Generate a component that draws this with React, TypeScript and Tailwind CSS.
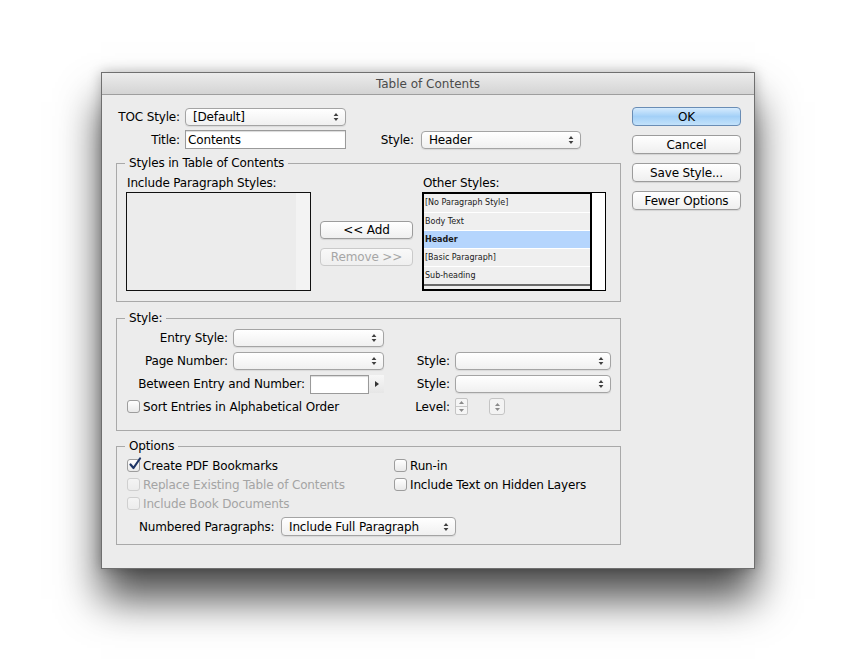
import React from "react";

const F = "font-['DejaVu_Sans',sans-serif] tracking-[-0.15px]";

function Arrows({ disabled }: { disabled?: boolean }) {
  return (
    <svg width="6" height="10" viewBox="0 0 6 10" className="shrink-0">
      <path d="M0.6 4 L3 1 L5.4 4 Z M0.6 6 L3 9 L5.4 6 Z" fill={disabled ? "#a0a0a0" : "#404040"} />
    </svg>
  );
}

function Select({ cls, value }: { cls: string; value?: string }) {
  return (
    <div
      className={`flex items-center justify-between rounded-[4px] border border-[#a4a4a4] bg-linear-to-b from-white to-[#f0f0f0] pl-[7px] pr-[6px] shadow-[0_1px_1px_rgba(0,0,0,0.08)] ${cls}`}
    >
      <span className="whitespace-nowrap text-[12px] leading-none text-black">{value ?? ""}</span>
      <Arrows />
    </div>
  );
}

function Button({ cls, children, primary, disabled }: { cls: string; children: React.ReactNode; primary?: boolean; disabled?: boolean }) {
  const base = "flex items-center justify-center rounded-[4px] border text-[12px] leading-none whitespace-nowrap";
  const look = primary
    ? "border-[#6a8db5] bg-linear-to-b from-[#d6ebfd] via-[#a3d0f7] to-[#c3e2fb] text-black"
    : disabled
    ? "border-[#cacaca] bg-linear-to-b from-[#f9f9f9] to-[#efefef] text-[#a6a6a6]"
    : "border-[#9c9c9c] bg-linear-to-b from-white to-[#efefef] text-black shadow-[0_1px_1px_rgba(0,0,0,0.1)]";
  return <div className={`${base} ${look} ${cls}`}>{children}</div>;
}

function Check({ checked, disabled }: { checked?: boolean; disabled?: boolean }) {
  return (
    <div
      className={`relative h-[13px] w-[13px] shrink-0 rounded-[3px] border bg-linear-to-b ${
        disabled ? "border-[#cfcfcf] from-[#f4f4f4] to-[#ececec]" : "border-[#9d9d9d] from-white to-[#e9e9e9]"
      }`}
    >
      {checked && (
        <svg width="15" height="15" viewBox="0 0 15 15" className="absolute -top-[3px] left-[0px]">
          <path d="M2.5 7.5 L5.5 11 L12 1.5" fill="none" stroke="#1e3566" strokeWidth="2.2" strokeLinecap="round" strokeLinejoin="round" />
        </svg>
      )}
    </div>
  );
}

function CheckRow({ label, checked, disabled }: { label: string; checked?: boolean; disabled?: boolean }) {
  return (
    <div className="flex h-[19px] items-center">
      <Check checked={checked} disabled={disabled} />
      <span className={`ml-[3px] whitespace-nowrap text-[12px] ${disabled ? "text-[#a4a4a4]" : "text-black"}`}>{label}</span>
    </div>
  );
}

function Legend({ children }: { children: React.ReactNode }) {
  return <legend className="ml-[8px] px-[4px] text-[12px] leading-[14px] text-black">{children}</legend>;
}

function ListRow({ text, selected, bold, first }: { text: string; selected?: boolean; bold?: boolean; first?: boolean }) {
  return (
    <div
      className={`flex h-[18px] items-center whitespace-nowrap pl-[1px] text-[8px] tracking-normal ${first ? "" : "border-t border-white"} ${
        selected ? "bg-[#b5d5fd]" : "bg-[#efefef]"
      } ${bold ? "font-bold" : ""} text-[#1a1a1a]`}
    >
      {text}
    </div>
  );
}

function Stepper() {
  return (
    <div className="ml-[5px] flex h-[17px] items-stretch">
      <div className="flex w-[13px] flex-col rounded-[2px] border border-[#c4c4c4] bg-[#f5f5f5]">
        <div className="flex flex-1 items-center justify-center border-b border-[#c9c9c9]">
          <svg width="5" height="3" viewBox="0 0 5 3"><path d="M0 3 L2.5 0 L5 3 Z" fill="#8a8a8a" /></svg>
        </div>
        <div className="flex flex-1 items-center justify-center">
          <svg width="5" height="3" viewBox="0 0 5 3"><path d="M0 0 L2.5 3 L5 0 Z" fill="#8a8a8a" /></svg>
        </div>
      </div>
      <div className="w-[21px]" />
      <div className="flex w-[16px] flex-col items-center justify-center gap-[2px] rounded-[3px] border border-[#c4c4c4] bg-[#f3f3f3]">
        <svg width="5" height="3" viewBox="0 0 5 3"><path d="M0 3 L2.5 0 L5 3 Z" fill="#8a8a8a" /></svg>
        <svg width="5" height="3" viewBox="0 0 5 3"><path d="M0 0 L2.5 3 L5 0 Z" fill="#8a8a8a" /></svg>
      </div>
    </div>
  );
}

export default function App() {
  return (
    <div className={`h-[667px] w-[850px] overflow-hidden bg-white pl-[101px] pt-[72px] ${F}`}>
      <div className="flex h-[497px] w-[654px] flex-col border border-[#6f6f6f] bg-[#ececec] shadow-[0_30px_40px_rgba(0,0,0,0.7),0_0_12px_rgba(0,0,0,0.25)]">
        {/* Title bar */}
        <div className="flex h-[22px] items-center justify-center border-b border-[#9e9e9e] bg-linear-to-b from-[#ececec] to-[#d4d4d4] text-[12px] tracking-normal text-[#4b4b4b]">
          Table of Contents
        </div>

        <div className="flex pl-[14px]">
          {/* Left column */}
          <div className="flex w-[505px] flex-col pt-[13px]">
            <div className="flex h-[18px] items-center">
              <span className="w-[64px] whitespace-nowrap text-right text-[12px] text-black">TOC Style:</span>
              <Select cls="ml-[5px] h-[18px] w-[161px]" value="[Default]" />
            </div>
            <div className="mt-[4px] flex h-[19px] items-center">
              <span className="w-[64px] text-right text-[12px] text-black">Title:</span>
              <div className="ml-[5px] flex h-[19px] w-[161px] items-center border border-[#9a9a9a] bg-white pl-[2px] text-[12px] shadow-[inset_0_1px_1px_rgba(0,0,0,0.15)]">
                Contents
              </div>
              <span className="w-[68px] text-right text-[12px] text-black">Style:</span>
              <Select cls="ml-[7px] h-[18px] w-[160px]" value="Header" />
            </div>

            {/* Styles in Table of Contents */}
            <fieldset className="mt-[7px] h-[146px] border border-[#a9a9a9]">
              <Legend>Styles in Table of Contents</Legend>
              <div className="mt-[6px] flex pl-[9px]">
                <div className="flex w-[185px] flex-col">
                  <div className="h-[14px] whitespace-nowrap pl-[1px] text-[12px] leading-[14px]">Include Paragraph Styles:</div>
                  <div className="mt-[2px] flex h-[99px] border border-[#111] bg-[#ececec]">
                    <div className="flex-1" />
                    <div className="w-[14px] bg-[#f3f3f3]" />
                  </div>
                </div>
                <div className="ml-[9px] flex w-[93px] flex-col pt-[45px]">
                  <Button cls="h-[18px]">&lt;&lt; Add</Button>
                  <Button cls="mt-[9px] h-[18px]" disabled>Remove &gt;&gt;</Button>
                </div>
                <div className="ml-[9px] flex w-[184px] flex-col">
                  <div className="h-[14px] pl-[1px] text-[12px] leading-[14px]">Other Styles:</div>
                  <div className="mt-[2px] flex h-[99px]">
                    <div className="flex w-[170px] flex-col border-2 border-black bg-[#efefef]">
                      <ListRow text="[No Paragraph Style]" first />
                      <ListRow text="Body Text" />
                      <ListRow text="Header" selected bold />
                      <ListRow text="[Basic Paragraph]" />
                      <ListRow text="Sub-heading" />
                      <div className="h-[2px] bg-[#6a6a6a]" />
                    </div>
                    <div className="w-[14px] border-y border-r border-black bg-white" />
                  </div>
                </div>
              </div>
            </fieldset>

            {/* Style */}
            <fieldset className="mt-[9px] h-[120px] border border-[#a9a9a9]">
              <Legend>Style:</Legend>
              <div className="mt-[4px] flex flex-col gap-[5px]">
                <div className="flex h-[18px] items-center">
                  <div className="flex w-[267px] items-center justify-end">
                    <span className="whitespace-nowrap text-[12px]">Entry Style:</span>
                    <Select cls="ml-[5px] h-[18px] w-[151px]" />
                  </div>
                </div>
                <div className="flex h-[18px] items-center">
                  <div className="flex w-[267px] items-center justify-end">
                    <span className="whitespace-nowrap text-[12px]">Page Number:</span>
                    <Select cls="ml-[5px] h-[18px] w-[151px]" />
                  </div>
                  <span className="w-[66px] text-right text-[12px]">Style:</span>
                  <Select cls="ml-[5px] h-[18px] w-[156px]" />
                </div>
                <div className="flex h-[18px] items-center">
                  <div className="flex w-[267px] items-center justify-end">
                    <span className="whitespace-nowrap text-[12px]">Between Entry and Number:</span>
                    <div className="ml-[5px] h-[19px] w-[59px] border border-[#9a9a9a] bg-white shadow-[inset_0_1px_1px_rgba(0,0,0,0.15)]" />
                    <div className="flex h-[18px] w-[15px] items-center justify-center bg-linear-to-b from-[#f7f7f7] to-[#e6e6e6]">
                      <svg width="4" height="6" viewBox="0 0 4 6"><path d="M0 0 L4 3 L0 6 Z" fill="#333" /></svg>
                    </div>
                  </div>
                  <span className="w-[66px] text-right text-[12px]">Style:</span>
                  <Select cls="ml-[5px] h-[18px] w-[156px]" />
                </div>
                <div className="flex h-[17px] items-center">
                  <div className="flex w-[267px] items-center pl-[10px]">
                    <Check />
                    <span className="ml-[3px] whitespace-nowrap text-[12px]">Sort Entries in Alphabetical Order</span>
                  </div>
                  <span className="w-[66px] text-right text-[12px]">Level:</span>
                  <Stepper />
                </div>
              </div>
            </fieldset>

            {/* Options */}
            <fieldset className="mt-[8px] h-[106px] border border-[#a9a9a9]">
              <Legend>Options</Legend>
              <div className="mt-[3px] flex">
                <div className="flex w-[277px] flex-col pl-[10px]">
                  <CheckRow label="Create PDF Bookmarks" checked />
                  <CheckRow label="Replace Existing Table of Contents" disabled />
                  <CheckRow label="Include Book Documents" disabled />
                </div>
                <div className="flex flex-col">
                  <CheckRow label="Run-in" />
                  <CheckRow label="Include Text on Hidden Layers" />
                </div>
              </div>
              <div className="mt-[4px] flex h-[19px] items-center pl-[22px]">
                <span className="w-[142px] whitespace-nowrap text-[12px]">Numbered Paragraphs:</span>
                <Select cls="h-[19px] w-[175px]" value="Include Full Paragraph" />
              </div>
            </fieldset>
          </div>

          {/* Right buttons */}
          <div className="ml-[11px] flex w-[109px] flex-col gap-[9px] pt-[12px]">
            <Button cls="h-[19px]" primary>OK</Button>
            <Button cls="h-[19px]">Cancel</Button>
            <Button cls="h-[19px]">Save Style...</Button>
            <Button cls="h-[19px]">Fewer Options</Button>
          </div>
        </div>
      </div>
    </div>
  );
}
